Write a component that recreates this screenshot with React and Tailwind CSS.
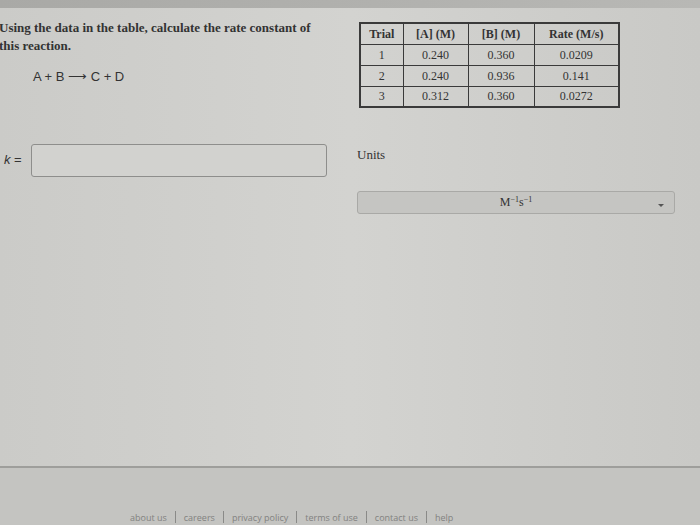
import React from 'react';

const rows = [
  ['1', '0.240', '0.360', '0.0209'],
  ['2', '0.240', '0.936', '0.141'],
  ['3', '0.312', '0.360', '0.0272'],
];

const links = ['about us', 'careers', 'privacy policy', 'terms of use', 'contact us', 'help'];

export default function App() {
  return (
    <div className="w-[700px] h-[525px] overflow-hidden flex flex-col bg-[#cfcfcc] text-[#2a2a2a]" style={{ fontFamily: '"Liberation Serif", serif' }}>
      <div className="h-[8px] bg-gradient-to-r from-[#a9a9a6] to-[#b8b8b5]" />
      <div className="h-[458px] flex bg-gradient-to-r from-[#cbcbc8] via-[#d3d3d0] to-[#c9c9c6]">
        <div className="w-[357px] flex flex-col">
          <p className="mt-[11px] -ml-[1px] text-[13px] leading-[18px] font-bold text-[#333]">
            Using the data in the table, calculate the rate constant of<br />this reaction.
          </p>
          <p className="mt-[12px] ml-[33px] text-[13px] text-[#333]" style={{ fontFamily: '"Liberation Sans", sans-serif' }}>A + B ⟶ C + D</p>
          <div className="mt-[57px] flex items-center">
            <span className="w-[31px] pl-[4px] text-[13px] text-[#333]" style={{ fontFamily: '"Liberation Sans", sans-serif' }}><i>k</i> =</span>
            <div className="w-[296px] h-[33px] rounded-[3px] border border-[#8e8e8c] bg-[#d2d2cf]" />
          </div>
        </div>
        <div className="flex flex-col items-start">
          <table className="mt-[14px] ml-[2px] border-collapse border-2 border-[#3a3a3a] text-[12px] text-[#333] text-center">
            <thead>
              <tr className="h-[21px] font-bold">
                <th className="w-[43px] border border-[#3a3a3a]">Trial</th>
                <th className="w-[65px] border border-[#3a3a3a]">[A] (M)</th>
                <th className="w-[66px] border border-[#3a3a3a]">[B] (M)</th>
                <th className="w-[85px] border border-[#3a3a3a]">Rate (M/s)</th>
              </tr>
            </thead>
            <tbody>
              {rows.map((r) => (
                <tr key={r[0]} className="h-[21px]">
                  {r.map((c, i) => (
                    <td key={i} className="border border-[#3a3a3a]">{c}</td>
                  ))}
                </tr>
              ))}
            </tbody>
          </table>
          <p className="mt-[37px] text-[13px] text-[#333]">Units</p>
          <div className="mt-[26px] w-[318px] h-[23px] rounded-[3px] border border-[#a9a9a6] bg-[#c5c5c2] flex items-center relative">
            <span className="flex-1 text-center text-[12px] text-[#333]">M<sup className="text-[8px]">−1</sup>s<sup className="text-[8px]">−1</sup></span>
            <span className="absolute right-[10px] top-[12px] w-0 h-0 border-l-[3px] border-r-[3px] border-t-[3px] border-l-transparent border-r-transparent border-t-[#555]" />
          </div>
        </div>
      </div>
      <div className="h-[2px] bg-[#9e9e9b]" />
      <div className="flex-1 bg-[#c4c4c1] flex items-end justify-start pb-[1px] pl-[130px]" style={{ fontFamily: '"Open Sans", sans-serif' }}>
        {links.map((l, i) => (
          <div key={l} className="flex items-center text-[9px] text-[#828280]">
            <span>{l}</span>
            {i < links.length - 1 && <span className="mx-[8px] w-px h-[12px] bg-[#8a8a88]" />}
          </div>
        ))}
      </div>
    </div>
  );
}
